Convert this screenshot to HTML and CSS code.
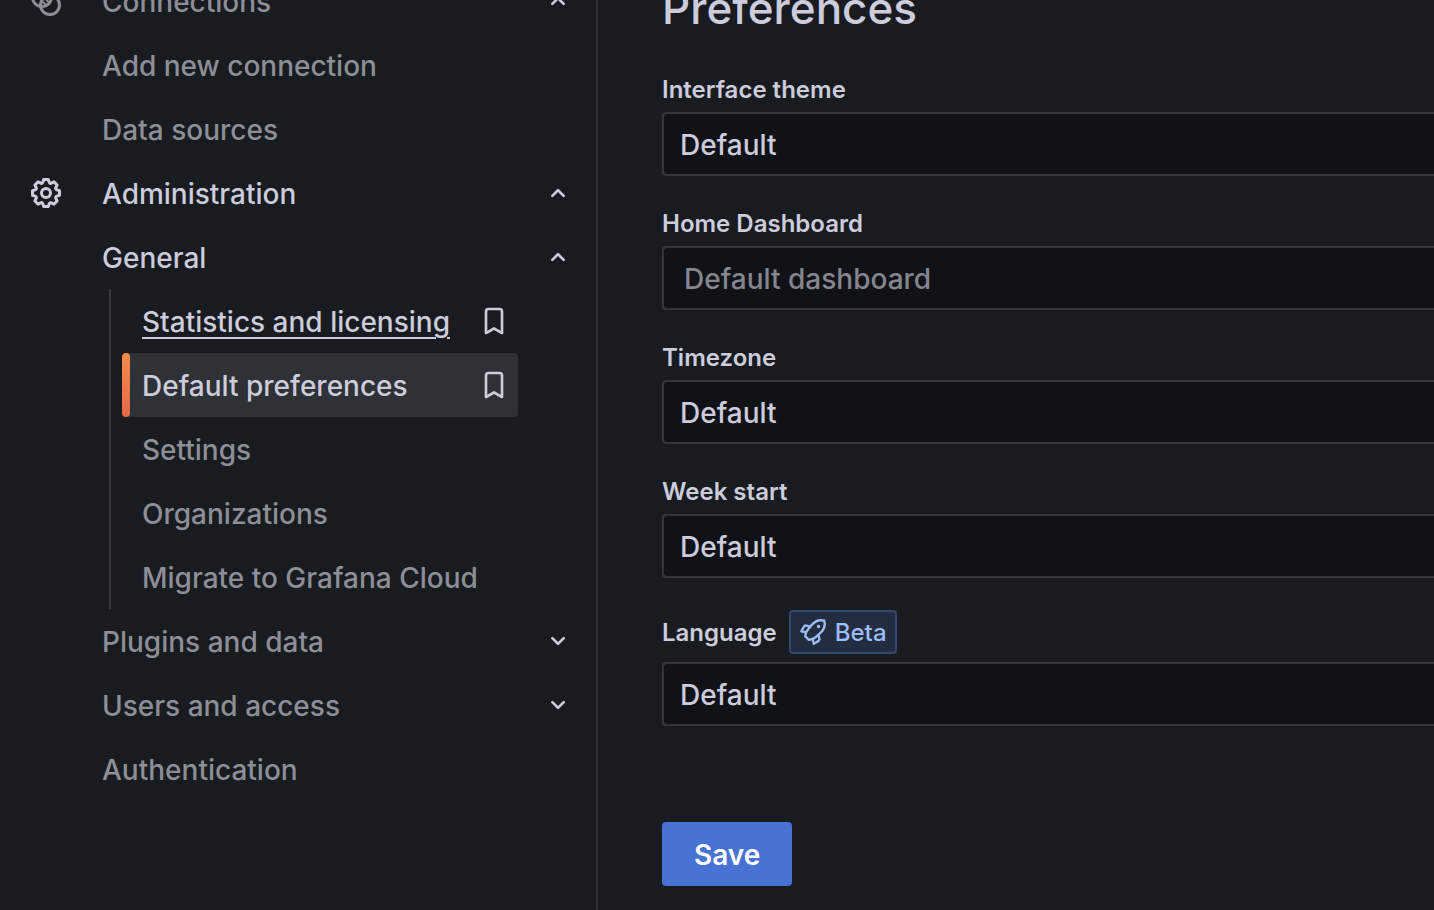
FILE: index.html
```html
<!DOCTYPE html>
<html lang="en">
<head>
  <meta charset="UTF-8" />
  <meta name="viewport" content="width=device-width, initial-scale=1.0"/>
  <title>Default preferences - Administration</title>
  <link rel="stylesheet" href="styles.css">
</head>
<body>

  <svg class="sprite" aria-hidden="true">
    <symbol id="up" viewBox="0 0 24 24"><path d="M17,13.41,12.71,9.17a1,1,0,0,0-1.42,0L7.05,13.41a1,1,0,0,0,0,1.42,1,1,0,0,0,1.41,0L12,11.29l3.54,3.54a1,1,0,0,0,.7.29,1,1,0,0,0,.71-.29A1,1,0,0,0,17,13.41Z"/></symbol>
    <symbol id="down" viewBox="0 0 24 24"><path d="M17,9.17a1,1,0,0,0-1.41,0L12,12.71,8.46,9.17a1,1,0,0,0-1.41,0,1,1,0,0,0,0,1.42l4.24,4.24a1,1,0,0,0,1.42,0L17,10.59A1,1,0,0,0,17,9.17Z"/></symbol>
    <symbol id="bookmark" viewBox="0 0 24 24"><path d="M16,2H8A3,3,0,0,0,5,5V21a1,1,0,0,0,.5.87,1,1,0,0,0,1,0L12,18.69l5.5,3.18A1,1,0,0,0,18,22a1,1,0,0,0,.5-.13A1,1,0,0,0,19,21V5A3,3,0,0,0,16,2Zm1,17.27-4.5-2.6a1,1,0,0,0-1,0L7,19.27V5A1,1,0,0,1,8,4h8a1,1,0,0,1,1,1Z"/></symbol>
  </svg>

  <!-- Sidebar -->
  <nav class="sidebar" aria-label="Main menu">
    <div class="row">
      <svg class="row-icon outline" viewBox="0 0 36 36">
        <circle cx="14" cy="14" r="9.5"/>
        <circle cx="22" cy="22" r="9.5"/>
        <path d="M13.5 17.5l5 5M16 14.5l6 6M18.5 13l4 4"/>
      </svg>
      <a href="#">Connections</a>
      <button class="toggle" aria-label="Collapse Connections"><svg><use href="#up"/></svg></button>
    </div>
    <div class="row child"><a href="#">Add new connection</a></div>
    <div class="row child"><a href="#">Data sources</a></div>

    <div class="row open">
      <svg class="row-icon" viewBox="0 0 24 24"><path d="M21.32,9.55l-1.89-.63.89-1.78A1,1,0,0,0,20.13,6L18,3.87a1,1,0,0,0-1.15-.19l-1.78.89-.63-1.89A1,1,0,0,0,13.5,2h-3a1,1,0,0,0-.95.68L8.92,4.57,7.14,3.68A1,1,0,0,0,6,3.87L3.87,6a1,1,0,0,0-.19,1.15l.89,1.78-1.89.63A1,1,0,0,0,2,10.5v3a1,1,0,0,0,.68.95l1.89.63-.89,1.78A1,1,0,0,0,3.87,18L6,20.13a1,1,0,0,0,1.15.19l1.78-.89.63,1.89a1,1,0,0,0,.95.68h3a1,1,0,0,0,.95-.68l.63-1.89,1.78.89A1,1,0,0,0,18,20.13L20.13,18a1,1,0,0,0,.19-1.15l-.89-1.78,1.89-.63A1,1,0,0,0,22,13.5v-3A1,1,0,0,0,21.32,9.55ZM20,12.78l-1.2.4A2,2,0,0,0,17.64,16l.57,1.14-1.1,1.1L16,17.64a2,2,0,0,0-2.79,1.16l-.4,1.2H11.22l-.4-1.2A2,2,0,0,0,8,17.64l-1.14.57-1.1-1.1L6.36,16A2,2,0,0,0,5.2,13.18L4,12.78V11.22l1.2-.4A2,2,0,0,0,6.36,8L5.79,6.89l1.1-1.1L8,6.36A2,2,0,0,0,10.82,5.2l.4-1.2h1.56l.4,1.2A2,2,0,0,0,16,6.36l1.14-.57,1.1,1.1L17.64,8a2,2,0,0,0,1.16,2.79l1.2.4ZM12,8a4,4,0,1,0,4,4A4,4,0,0,0,12,8Zm0,6a2,2,0,1,1,2-2A2,2,0,0,1,12,14Z"/></svg>
      <a href="#">Administration</a>
      <button class="toggle" aria-label="Collapse Administration"><svg><use href="#up"/></svg></button>
    </div>
    <div class="row child open">
      <a href="#">General</a>
      <button class="toggle" aria-label="Collapse General"><svg><use href="#up"/></svg></button>
    </div>

    <div class="group">
      <div class="item hovered">
        <a href="#">Statistics and licensing</a>
        <button class="toggle" aria-label="Bookmark Statistics and licensing"><svg><use href="#bookmark"/></svg></button>
      </div>
      <div class="item active">
        <a href="#" aria-current="page">Default preferences</a>
        <button class="toggle" aria-label="Bookmark Default preferences"><svg><use href="#bookmark"/></svg></button>
      </div>
      <div class="item"><a href="#">Settings</a></div>
      <div class="item"><a href="#">Organizations</a></div>
      <div class="item"><a href="#">Migrate to Grafana Cloud</a></div>
    </div>

    <div class="row child">
      <a href="#">Plugins and data</a>
      <button class="toggle" aria-label="Expand Plugins and data"><svg><use href="#down"/></svg></button>
    </div>
    <div class="row child">
      <a href="#">Users and access</a>
      <button class="toggle" aria-label="Expand Users and access"><svg><use href="#down"/></svg></button>
    </div>
    <div class="row child"><a href="#">Authentication</a></div>
  </nav>

  <!-- Preferences form -->
  <main>
    <h1>Preferences</h1>
    <form>
      <div class="field">
        <label for="theme">Interface theme</label>
        <select id="theme"><option>Default</option></select>
      </div>
      <div class="field">
        <label for="home">Home Dashboard</label>
        <input id="home" type="text" placeholder="Default dashboard">
      </div>
      <div class="field">
        <label for="timezone">Timezone</label>
        <select id="timezone"><option>Default</option></select>
      </div>
      <div class="field">
        <label for="week">Week start</label>
        <select id="week"><option>Default</option></select>
      </div>
      <div class="field">
        <div class="label-row">
          <label for="language">Language</label>
          <span class="badge">
            <svg viewBox="0 0 24 24"><path d="M22.601 2.062a1 1 0 0 0-.713-.713A11.252 11.252 0 0 0 10.47 4.972L9.354 6.296 6.75 5.668a2.777 2.777 0 0 0-3.387 1.357l-2.2 3.9a1 1 0 0 0 .661 1.469l3.073.659a13.42 13.42 0 0 0-.555 2.434 1 1 0 0 0 .284.836l3.1 3.1a1 1 0 0 0 .708.293c.029 0 .057-.001.086-.004a12.169 12.169 0 0 0 2.492-.49l.644 3.004a1 1 0 0 0 1.469.661l3.905-2.202a3.035 3.035 0 0 0 1.375-3.304l-.668-2.76 1.237-1.137A11.204 11.204 0 0 0 22.6 2.062ZM3.572 10.723l1.556-2.76a.826.826 0 0 1 1.07-.375l1.718.416-.65.772a13.095 13.095 0 0 0-1.59 2.398Zm12.47 8.222-2.715 1.532-.43-2.005a11.34 11.34 0 0 0 2.414-1.62l.743-.683.404 1.664a1.041 1.041 0 0 1-.416 1.112Zm1.615-6.965-3.685 3.386a9.773 9.773 0 0 1-5.17 2.304l-2.405-2.404a10.932 10.932 0 0 1 2.401-5.206l1.679-1.993a.964.964 0 0 0 .078-.092L11.99 6.27a9.278 9.278 0 0 1 8.81-3.12 9.218 9.218 0 0 1-3.143 8.829Zm-.923-6.164a1.5 1.5 0 1 0 1.5 1.5 1.5 1.5 0 0 0-1.5-1.5Z"/></svg>
            Beta
          </span>
        </div>
        <select id="language"><option>Default</option></select>
      </div>
      <button class="save" type="button">Save</button>
    </form>
  </main>

</body>
</html>
```
FILE: styles.css
```css
* {
  box-sizing: border-box;
  margin: 0;
  padding: 0;
  font-family: Inter, Roboto, sans-serif;
}

body {
  display: flex;
  height: 100vh;
  overflow: hidden;
  background: #181b1f;
  color: #ccccdc;
  font-size: 28px;
  font-optical-sizing: none;
}

a {
  padding-top: 2px;
  color: inherit;
  font-weight: 450;
  text-decoration: none;
  white-space: nowrap;
}

svg {
  fill: currentColor;
}

.sprite {
  display: none;
}

/* Sidebar, scrolled part of the way down */
.sidebar {
  flex: 0 0 598px;
  border-right: 2px solid #2e3035;
  color: #8e8e99;
}

.sidebar > :first-child {
  margin-top: -31px;
}

.row,
.item {
  display: flex;
  align-items: center;
  height: 64px;
}

.row {
  padding: 0 22px 0 28px;
}

.row.child {
  padding-left: 102px;
}

.row-icon {
  width: 36px;
  height: 36px;
  margin-right: 38px;
}

.outline {
  fill: none;
  stroke: currentColor;
  stroke-width: 3px;
}

.outline path {
  stroke-width: 2px;
}

.open,
.hovered,
.active {
  color: #ccccdc;
}

.toggle {
  width: 32px;
  height: 32px;
  margin-left: auto;
  border: none;
  background: none;
  color: #ccccdc;
  cursor: pointer;
}

.toggle svg {
  display: block;
  width: 32px;
  height: 32px;
}

.group {
  margin-left: 109px;
  padding: 0 78px 0 11px;
  border-left: 2px solid #34363b;
}

.item {
  padding: 0 8px 0 20px;
  border-radius: 4px;
}

.hovered a,
.item a:hover {
  text-decoration: underline;
  text-decoration-thickness: 2px;
  text-underline-offset: 5px;
}

.active {
  position: relative;
  background: #2e3136;
}

.active::before {
  content: "";
  position: absolute;
  left: 0;
  top: 0;
  bottom: 0;
  width: 8px;
  border-radius: 4px;
  background: linear-gradient(#f58c46, #e5684a);
}

/* Form */
main {
  flex: 1;
  min-width: 0;
  padding-left: 64px;
}

h1 {
  height: 56px;
  margin: -20px 0 38px;
  font-size: 44px;
  font-weight: 450;
  line-height: 56px;
}

.field {
  margin-bottom: 32px;
}

label {
  display: block;
  margin-bottom: 7px;
  padding-top: 1px;
  font-size: 24px;
  font-weight: 600;
  line-height: 30px;
}

/* fields bleed off the right side of the pane */
select,
input {
  display: block;
  width: 100%;
  height: 64px;
  padding: 2px 16px 0;
  border: 2px solid #35363c;
  border-right: none;
  border-radius: 4px 0 0 4px;
  background: #111217;
  color: #ccccdc;
  font-size: 28px;
  font-weight: 450;
  font-optical-sizing: none;
  appearance: none;
}

input {
  padding: 2px 20px 0;
}

input::placeholder {
  color: #85858f;
}

.label-row {
  display: flex;
  align-items: center;
  gap: 12px;
  margin-bottom: 8px;
}

.label-row label {
  margin-bottom: 0;
}

.badge {
  display: flex;
  align-items: center;
  gap: 8px;
  height: 44px;
  padding: 0 8px;
  border: 2px solid #35496f;
  border-radius: 4px;
  background: #242d3f;
  color: #9cbdf8;
  font-size: 24px;
  font-weight: 450;
}

.badge svg {
  width: 28px;
  height: 28px;
}

.save {
  height: 64px;
  margin-top: 64px;
  padding: 2px 32px 0;
  border: none;
  border-radius: 4px;
  background: #4872d3;
  color: #fff;
  font-size: 28px;
  font-weight: 600;
  font-optical-sizing: none;
  cursor: pointer;
}
```
